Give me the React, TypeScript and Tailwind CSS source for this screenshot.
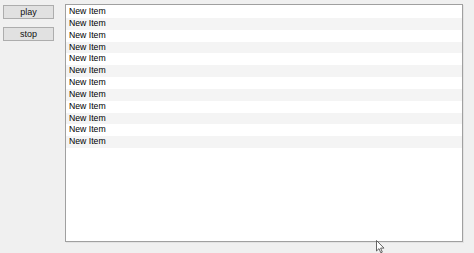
import React from "react";

export default function App() {
  const items = Array.from({ length: 12 }, () => "New Item");
  return (
    <div
      className="relative w-[474px] h-[253px] bg-[#f0f0f0] flex overflow-hidden"
      style={{ fontFamily: '"Liberation Sans", Arial, sans-serif' }}
    >
      <div className="flex flex-col gap-[8px] pl-[3px] pt-[5px] w-[65px]">
        <button className="w-[51px] h-[14px] bg-[#e1e1e1] border border-[#adadad] text-[9px] leading-[12px] text-[#111]">
          play
        </button>
        <button className="w-[51px] h-[14px] bg-[#e1e1e1] border border-[#adadad] text-[9px] leading-[12px] text-[#111]">
          stop
        </button>
      </div>
      <div className="mt-[4px] w-[398px] h-[238px] border border-[#a0a0a0] bg-white shadow-[1px_1px_0_#e3e3e3]">
        <div className="pt-[1px]">
          {items.map((t, i) => (
            <div
              key={i}
              className={`h-[11.85px] pl-[3px] text-[8.7px] leading-[11.85px] text-black ${
                i % 2 === 1 ? "bg-[#f4f4f4]" : "bg-white"
              }`}
            >
              {t}
            </div>
          ))}
        </div>
      </div>
      <svg
        className="absolute left-[376px] top-[240px]"
        width="9"
        height="14"
        viewBox="0 0 9 14"
      >
        <path
          d="M0.5 0.5 L0.5 11 L3 8.6 L4.8 12.8 L6.3 12.1 L4.6 8.1 L8 8.1 Z"
          fill="#fff"
          stroke="#555"
          strokeWidth="0.9"
          strokeLinejoin="round"
        />
      </svg>
    </div>
  );
}
